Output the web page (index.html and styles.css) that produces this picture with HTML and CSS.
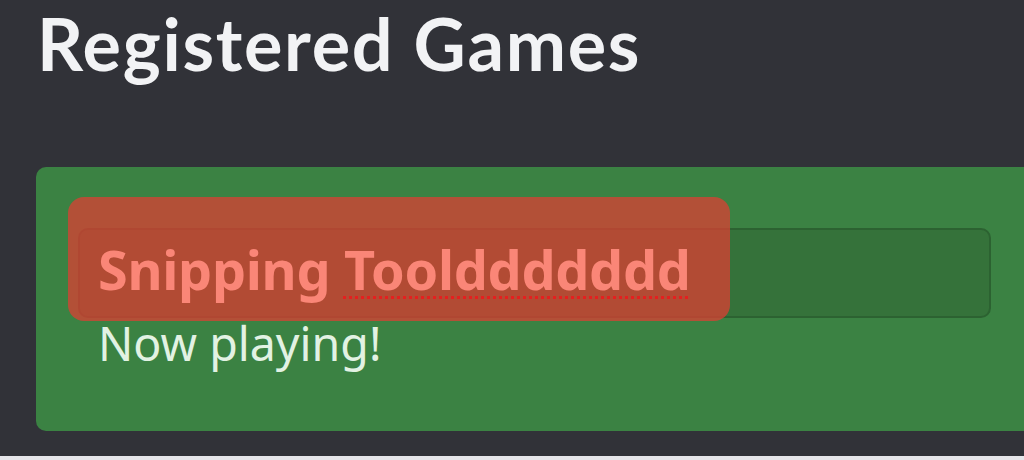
FILE: index.html
```html
<!DOCTYPE html>
<html>
<head>
<meta charset="utf-8">
<link rel="stylesheet" href="styles.css">
</head>
<body>
<div class="page">
  <h1 class="title">Registered Games</h1>
  <div class="card">
    <div class="input">
      <div class="redact"></div>
      <span class="game">Snipping <span class="typo">Toolddddddd</span></span>
    </div>
    <div class="status">Now playing!</div>
  </div>
  <div class="bottom-line"></div>
</div>
</body>
</html>
```
FILE: styles.css
```css
html, body {
  margin: 0;
  padding: 0;
}
body {
  width: 1024px;
  height: 460px;
  overflow: hidden;
  background: #313238;
  font-family: "Noto Sans", "Open Sans", sans-serif;
}
.page {
  height: 460px;
  display: flex;
  flex-direction: column;
}
.title {
  margin: 0 0 0 37px;
  height: 167px;
  font-family: Lato, "Noto Sans", sans-serif;
  font-size: 72px;
  font-weight: 700;
  line-height: 87px;
  color: #f2f3f5;
  letter-spacing: 1.7px;
}
.card {
  margin-left: 36px;
  height: 264px;
  box-sizing: border-box;
  background: #3b8243;
  border-radius: 10px 0 0 10px;
  padding: 61px 33px 0 42px;
}
.input {
  position: relative;
  height: 90px;
  box-sizing: border-box;
  background: #35723a;
  border: 2px solid #2c6231;
  border-radius: 10px;
  padding-left: 18px;
  display: flex;
  align-items: center;
}
.redact {
  position: absolute;
  left: -12px;
  top: -33px;
  width: 662px;
  height: 124px;
  border-radius: 16px;
  background: rgba(220, 63, 51, 0.75);
}
.game {
  position: relative;
  font-size: 54px;
  font-weight: 700;
  color: #fa8677;
  line-height: 1;
  margin-top: -8px;
  letter-spacing: -0.3px;
}
.typo {
  text-decoration: underline dotted #e4201f;
  text-decoration-thickness: 3px;
  text-underline-offset: 6px;
}
.status {
  margin: -3px 0 0 20px;
  font-size: 46.5px;
  line-height: 56px;
  color: #e2f2e3;
}
.bottom-line {
  margin-top: auto;
  height: 4px;
  background: #e6e6ea;
}
```
